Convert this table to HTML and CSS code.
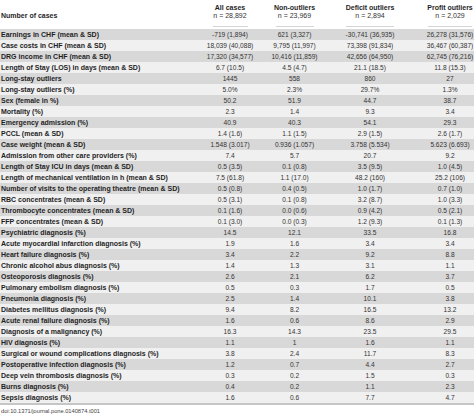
FILE: index.html
```html
<!DOCTYPE html>
<html>
<head>
<meta charset="utf-8">
<link rel="stylesheet" href="styles.css">
</head>
<body>
<div class="wrap">
<div class="tbl">
<div class="row head">
<div class="lab">Number of cases</div>
<div class="hc"><div class="hd hd-all"><span class="h1">All cases</span><span class="h2">n = 28,892</span></div></div>
<div class="hc"><div class="hd hd-non"><span class="h1">Non-outliers</span><span class="h2">n = 23,969</span></div></div>
<div class="hc"><div class="hd hd-def"><span class="h1">Deficit outliers</span><span class="h2">n = 2,894</span></div></div>
<div class="hc"><div class="hd hd-pro"><span class="h1">Profit outliers</span><span class="h2">n = 2,029</span></div></div>
</div>
<div class="body">
<div class="row"><span>Earnings in CHF (mean &amp; SD)</span><span>-719 (1,894)</span><span>621 (3,327)</span><span>-30,741 (36,935)</span><span>26,278 (31,576)</span></div>
<div class="row"><span>Case costs in CHF (mean &amp; SD)</span><span>18,039 (40,088)</span><span>9,795 (11,997)</span><span>73,398 (91,834)</span><span>36,467 (60,387)</span></div>
<div class="row"><span>DRG income in CHF (mean &amp; SD)</span><span>17,320 (34,577)</span><span>10,416 (11,859)</span><span>42,656 (64,950)</span><span>62,745 (76,216)</span></div>
<div class="row"><span>Length of Stay (LOS) in days (mean &amp; SD)</span><span>6.7 (10.5)</span><span>4.5 (4.7)</span><span>21.1 (18.5)</span><span>11.8 (15.3)</span></div>
<div class="row"><span>Long-stay outliers</span><span>1445</span><span>558</span><span>860</span><span>27</span></div>
<div class="row"><span>Long-stay outliers (%)</span><span>5.0%</span><span>2.3%</span><span>29.7%</span><span>1.3%</span></div>
<div class="row"><span>Sex (female in %)</span><span>50.2</span><span>51.9</span><span>44.7</span><span>38.7</span></div>
<div class="row"><span>Mortality (%)</span><span>2.3</span><span>1.4</span><span>9.3</span><span>3.4</span></div>
<div class="row"><span>Emergency admission (%)</span><span>40.9</span><span>40.3</span><span>54.1</span><span>29.3</span></div>
<div class="row"><span>PCCL (mean &amp; SD)</span><span>1.4 (1.6)</span><span>1.1 (1.5)</span><span>2.9 (1.5)</span><span>2.6 (1.7)</span></div>
<div class="row"><span>Case weight (mean &amp; SD)</span><span>1.548 (3.017)</span><span>0.936 (1.057)</span><span>3.758 (5.534)</span><span>5.623 (6.693)</span></div>
<div class="row"><span>Admission from other care providers (%)</span><span>7.4</span><span>5.7</span><span>20.7</span><span>9.2</span></div>
<div class="row"><span>Length of Stay ICU in days (mean &amp; SD)</span><span>0.5 (3.5)</span><span>0.1 (0.8)</span><span>3.5 (9.5)</span><span>1.0 (4.5)</span></div>
<div class="row"><span>Length of mechanical ventilation in h (mean &amp; SD)</span><span>7.5 (61.8)</span><span>1.1 (17.0)</span><span>48.2 (160)</span><span>25.2 (106)</span></div>
<div class="row"><span>Number of visits to the operating theatre (mean &amp; SD)</span><span>0.5 (0.8)</span><span>0.4 (0.5)</span><span>1.0 (1.7)</span><span>0.7 (1.0)</span></div>
<div class="row"><span>RBC concentrates (mean &amp; SD)</span><span>0.5 (3.1)</span><span>0.1 (0.8)</span><span>3.2 (8.7)</span><span>1.0 (3.3)</span></div>
<div class="row"><span>Thrombocyte concentrates (mean &amp; SD)</span><span>0.1 (1.6)</span><span>0.0 (0.6)</span><span>0.9 (4.2)</span><span>0.5 (2.1)</span></div>
<div class="row"><span>FFP concentrates (mean &amp; SD)</span><span>0.1 (3.0)</span><span>0.0 (0.3)</span><span>1.2 (9.3)</span><span>0.1 (1.3)</span></div>
<div class="row"><span>Psychiatric diagnosis (%)</span><span>14.5</span><span>12.1</span><span>33.5</span><span>16.8</span></div>
<div class="row"><span>Acute myocardial infarction diagnosis (%)</span><span>1.9</span><span>1.6</span><span>3.4</span><span>3.4</span></div>
<div class="row"><span>Heart failure diagnosis (%)</span><span>3.4</span><span>2.2</span><span>9.2</span><span>8.8</span></div>
<div class="row"><span>Chronic alcohol abus diagnosis (%)</span><span>1.4</span><span>1.3</span><span>3.1</span><span>1.1</span></div>
<div class="row"><span>Osteoporosis diagnosis (%)</span><span>2.6</span><span>2.1</span><span>6.2</span><span>3.7</span></div>
<div class="row"><span>Pulmonary embolism diagnosis (%)</span><span>0.5</span><span>0.3</span><span>1.7</span><span>0.5</span></div>
<div class="row"><span>Pneumonia diagnosis (%)</span><span>2.5</span><span>1.4</span><span>10.1</span><span>3.8</span></div>
<div class="row"><span>Diabetes mellitus diagnosis (%)</span><span>9.4</span><span>8.2</span><span>16.5</span><span>13.2</span></div>
<div class="row"><span>Acute renal failure diagnosis (%)</span><span>1.6</span><span>0.6</span><span>8.6</span><span>2.9</span></div>
<div class="row"><span>Diagnosis of a malignancy (%)</span><span>16.3</span><span>14.3</span><span>23.5</span><span>29.5</span></div>
<div class="row"><span>HIV diagnosis (%)</span><span>1.1</span><span>1</span><span>1.6</span><span>1.1</span></div>
<div class="row"><span>Surgical or wound complications diagnosis (%)</span><span>3.8</span><span>2.4</span><span>11.7</span><span>8.3</span></div>
<div class="row"><span>Postoperative infection diagnosis (%)</span><span>1.2</span><span>0.7</span><span>4.4</span><span>2.7</span></div>
<div class="row"><span>Deep vein thrombosis diagnosis (%)</span><span>0.3</span><span>0.2</span><span>1.5</span><span>0.3</span></div>
<div class="row"><span>Burns diagnosis (%)</span><span>0.4</span><span>0.2</span><span>1.1</span><span>2.3</span></div>
<div class="row"><span>Sepsis diagnosis (%)</span><span>1.6</span><span>0.6</span><span>7.7</span><span>4.7</span></div>
</div>
</div>
</div>
<p class="doi">doi:10.1371/journal.pone.0140874.t001</p>
</body>
</html>
```

FILE: styles.css
```css
html, body {
  margin: 0;
  padding: 0;
  background: #ffffff;
}
body {
  width: 474px;
  height: 415px;
  overflow: hidden;
  font-family: "Liberation Sans", Arial, sans-serif;
  color: #1f1f1f;
}
.wrap {
  width: 474px;
  overflow: hidden;
}
.tbl {
  width: 486px;
}
.row {
  display: grid;
  grid-template-columns: 197px 66px 63px 88px 72px;
}
.head {
  height: 29px;
}
.lab {
  padding: 12px 0 0 1px;
  font-size: 7px;
  line-height: 8px;
  font-weight: bold;
  white-space: nowrap;
}
.hc {
  display: flex;
  justify-content: center;
  align-items: flex-start;
}
.hd {
  display: flex;
  flex-direction: column;
  align-items: center;
  margin-top: 4px;
  padding-bottom: 6px;
  border-bottom: 1px solid #d4d4d4;
  font-size: 7px;
  line-height: 8px;
}
.hd-all { width: 35px; }
.hd-non { width: 38px; }
.hd-def { width: 48px; }
.hd-pro { width: 44px; }
.h1 { font-weight: bold; white-space: nowrap; }
.h2 { white-space: nowrap; color: #333; }

.body {
  border-bottom: 2px solid #c6c6c6;
}
.body .row {
  height: 11px;
  font-size: 6.6px;
  line-height: 11px;
  color: #333;
  text-align: center;
  white-space: nowrap;
}
.body .row:nth-child(odd) { background: #d8d8d8; }
.body .row:nth-child(even) { background: #f0f0f0; }
.body .row span:first-child {
  text-align: left;
  padding-left: 1px;
  font-size: 7px;
  font-weight: bold;
  color: #1f1f1f;
}
.doi {
  margin: 3px 0 0 1px;
  font-size: 5.7px;
  line-height: 7px;
  color: #444;
}
```
